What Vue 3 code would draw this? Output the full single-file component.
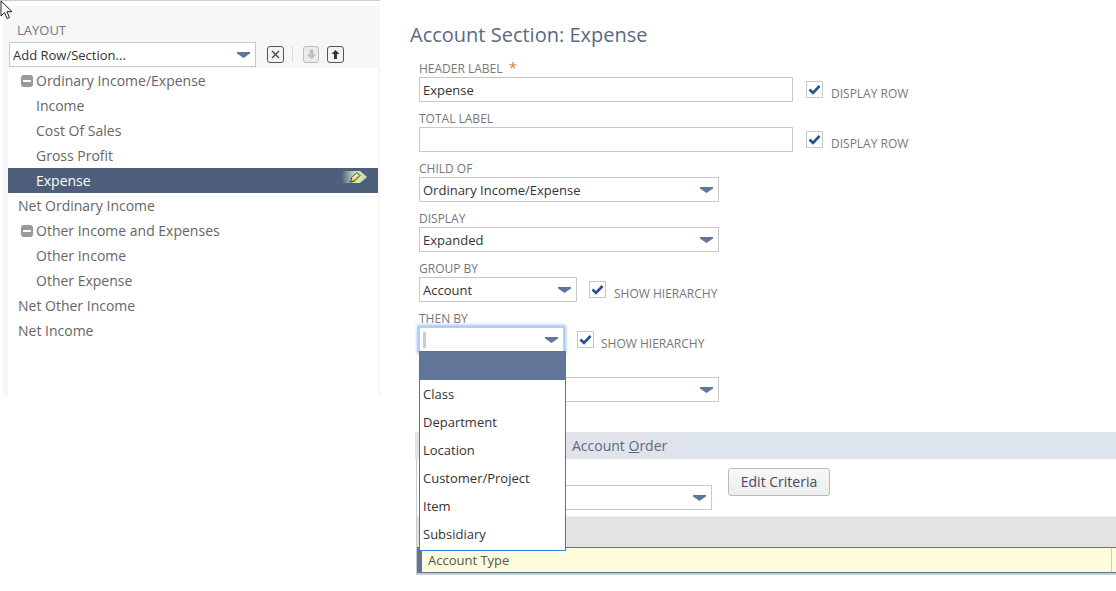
<script setup>
const rows = [
  { label: 'Ordinary Income/Expense', level: 1, toggle: true },
  { label: 'Income', level: 1 },
  { label: 'Cost Of Sales', level: 1 },
  { label: 'Gross Profit', level: 1 },
  { label: 'Expense', level: 1, selected: true },
  { label: 'Net Ordinary Income', level: 0 },
  { label: 'Other Income and Expenses', level: 1, toggle: true },
  { label: 'Other Income', level: 1 },
  { label: 'Other Expense', level: 1 },
  { label: 'Net Other Income', level: 0 },
  { label: 'Net Income', level: 0 }
]

const options = ['Class', 'Department', 'Location', 'Customer/Project', 'Item', 'Subsidiary']
</script>

<template>
  <div class="page">
    <svg class="cursor" width="13" height="20" viewBox="0 0 13 20">
      <path d="M1 1v15l3.5-3.4 2.6 6 2.4-1-2.6-5.9H12z" fill="#fff" stroke="#222" stroke-width="1" />
    </svg>

    <aside class="left">
      <div class="panel">
        <div class="layout-title">LAYOUT</div>
        <div class="toolbar">
          <div class="select add-select">
            <span>Add Row/Section...</span>
            <i class="arrow"></i>
          </div>
          <button class="tool first">
            <svg width="11" height="11" viewBox="0 0 11 11">
              <path d="M2 2l7 7M9 2l-7 7" stroke="#444" stroke-width="1.3" fill="none" />
            </svg>
          </button>
          <span class="sep"></span>
          <button class="tool disabled">
            <svg width="11" height="11" viewBox="0 0 11 11">
              <path d="M4 1h3v5h2.500L5.500 10 1.500 6H4z" fill="#c4c4c4" stroke="#aaa" stroke-width=".5" />
            </svg>
          </button>
          <button class="tool">
            <svg width="11" height="11" viewBox="0 0 11 11">
              <path d="M4 10h3V5h2.500L5.500 1 1.500 5H4z" fill="#333" />
            </svg>
          </button>
        </div>
        <ul class="tree">
          <li
            v-for="row in rows"
            :key="row.label"
            class="row"
            :class="{ selected: row.selected, indented: row.level === 1 }"
          >
            <span v-if="row.toggle" class="minus"></span>
            {{ row.label }}
            <svg v-if="row.selected" class="pencil" width="30" height="12" viewBox="0 0 30 12">
              <defs>
                <linearGradient id="tag" x1="0" x2="1" y1="0" y2="0">
                  <stop offset="0.15" stop-color="#dff2d0" stop-opacity="0" />
                  <stop offset="0.65" stop-color="#cfe9bc" />
                  <stop offset="1" stop-color="#c4e4ae" />
                </linearGradient>
              </defs>
              <path d="M0 0h23l7 6-7 6H0z" fill="url(#tag)" />
              <path d="M13.500 11l1-4 5.500-5.500 3 3-5.500 5.500z" fill="#f4c93f" stroke="#2c2c2c" stroke-width=".9" />
              <path d="M15.500 7.500l4.800-4.500" stroke="#fff" stroke-width="1.100" fill="none" />
            </svg>
          </li>
        </ul>
      </div>
    </aside>

    <main class="right">
      <h1>Account Section: Expense</h1>
      <div class="form">
        <div class="field">
          <label>HEADER LABEL <b class="req">*</b></label>
          <div class="line">
            <div class="input wide">Expense</div>
            <span class="check">
              <svg width="15" height="15" viewBox="0 0 15 15"><path d="M2.500 7.500L6 11l6.500-7" /></svg>
            </span>
            <span class="check-label">DISPLAY ROW</span>
          </div>
        </div>
        <div class="field">
          <label>TOTAL LABEL</label>
          <div class="line">
            <div class="input wide"></div>
            <span class="check">
              <svg width="15" height="15" viewBox="0 0 15 15"><path d="M2.500 7.500L6 11l6.500-7" /></svg>
            </span>
            <span class="check-label">DISPLAY ROW</span>
          </div>
        </div>
        <div class="field">
          <label>CHILD OF</label>
          <div class="select medium"><span>Ordinary Income/Expense</span><i class="arrow"></i></div>
        </div>
        <div class="field">
          <label>DISPLAY</label>
          <div class="select medium"><span>Expanded</span><i class="arrow"></i></div>
        </div>
        <div class="field">
          <label>GROUP BY</label>
          <div class="line">
            <div class="select group"><span>Account</span><i class="arrow"></i></div>
            <span class="check near">
              <svg width="15" height="15" viewBox="0 0 15 15"><path d="M2.500 7.500L6 11l6.500-7" /></svg>
            </span>
            <span class="check-label">SHOW HIERARCHY</span>
          </div>
        </div>
        <div class="field">
          <label>THEN BY</label>
          <div class="line">
            <div class="select then">
              <span class="caret"></span>
              <i class="arrow"></i>
              <ul class="menu">
                <li class="picked"></li>
                <li v-for="opt in options" :key="opt">{{ opt }}</li>
              </ul>
            </div>
            <span class="check nearer">
              <svg width="15" height="15" viewBox="0 0 15 15"><path d="M2.500 7.500L6 11l6.500-7" /></svg>
            </span>
            <span class="check-label">SHOW HIERARCHY</span>
          </div>
        </div>
        <div class="field">
          <label></label>
          <div class="select medium"><i class="arrow"></i></div>
        </div>
      </div>

      <div class="tabs">
        <div class="tab">Account <u>O</u>rder</div>
      </div>
      <div class="tab-body">
        <div class="criteria">
          <div class="select criteria-select"><i class="arrow"></i></div>
          <button class="edit">Edit Criteria</button>
        </div>
        <div class="grid-head"></div>
        <div class="grid-row">
          <span class="cell">Account Type</span>
          <span class="cell-end"></span>
        </div>
      </div>
    </main>
  </div>
</template>

<style>
html, body {
  margin: 0;
  background: #fff;
}
</style>

<style scoped>
.page {
  position: relative;
  display: flex;
  width: 1116px;
  height: 591px;
  overflow: hidden;
  font-family: "Open Sans", sans-serif;
  font-size: 13px;
  color: #666;
}

.cursor {
  position: absolute;
  left: 0;
  top: 0;
}

.left {
  width: 380px;
  height: 396px;
  flex: none;
  padding-top: 5px;
  box-sizing: border-box;
  border-top: 1px solid #ccc;
}

.panel {
  height: 390px;
  margin-left: 3px;
  background: #f6f6f6;
  padding: 0 2px 0 5px;
  display: flex;
  flex-direction: column;
}

.layout-title {
  height: 36px;
  padding: 15px 0 0 9px;
  box-sizing: border-box;
  line-height: 18px;
  color: #777;
}

.toolbar {
  display: flex;
  align-items: flex-start;
  height: 26px;
  margin-left: 1px;
}

.select {
  position: relative;
  display: flex;
  align-items: center;
  height: 25px;
  padding-left: 3px;
  box-sizing: border-box;
  border: 1px solid #c9c9c9;
  background: #fff;
  color: #333;
}

.arrow {
  position: absolute;
  right: 5px;
  top: 9px;
  width: 13px;
  height: 6px;
  background: #5f7599;
  clip-path: polygon(0 0, 100% 0, 100% 25%, 50% 100%, 0 25%);
}

.add-select {
  width: 247px;
}

.tool {
  display: flex;
  align-items: center;
  justify-content: center;
  width: 17px;
  height: 17px;
  padding: 0;
  margin: 4px 0 0 8px;
  border: 1px solid #555;
  border-radius: 3px;
  background: #f3f3f3;
}

.tool.first {
  margin-left: 11px;
}

.tool.disabled {
  width: 16px;
  margin-left: 1px;
  border-color: #bbb;
  background: #ececec;
}

.sep {
  width: 1px;
  height: 16px;
  margin: 4px 9px 0 8px;
  background: #ddd;
}

.tree {
  flex: 1;
  list-style: none;
  margin: 0;
  padding: 0;
  background: #fff;
}

.row {
  position: relative;
  display: flex;
  align-items: center;
  height: 25px;
  padding-left: 10px;
  font-size: 14px;
  color: #666;
}

.row.indented {
  padding-left: 28px;
}

.row.selected {
  background: #4d5f7a;
  color: #fff;
}

.minus {
  position: absolute;
  left: 13px;
  top: 7px;
  width: 12px;
  height: 12px;
  border-radius: 3px;
  background: #999;
}

.minus::after {
  content: "";
  position: absolute;
  left: 2px;
  right: 2px;
  top: 5px;
  height: 2px;
  background: #fff;
}

.pencil {
  position: absolute;
  right: 11px;
  top: 3px;
}

.right {
  flex: 1;
  min-width: 0;
  padding-left: 35px;
}

h1 {
  margin: 0 0 0 -5px;
  padding-top: 21px;
  height: 59px;
  box-sizing: border-box;
  font-size: 20px;
  font-weight: 400;
  line-height: 27px;
  color: #5a6a80;
}

.form {
  margin-left: 4px;
}

.field {
  height: 50px;
}

.field label {
  display: block;
  height: 18px;
  line-height: 19px;
  font-size: 12px;
  color: #777;
}

.req {
  margin-left: 3px;
  font-weight: 400;
  font-size: 15px;
  line-height: 12px;
  color: #d18a26;
}

.line {
  display: flex;
}

.input {
  height: 25px;
  line-height: 25px;
  padding-left: 3px;
  box-sizing: border-box;
  border: 1px solid #c9c9c9;
  color: #333;
}

.wide {
  width: 374px;
}

.medium {
  width: 300px;
}

.group {
  width: 158px;
}

.then {
  width: 145px;
  border-color: #b9cfe6;
  box-shadow: 0 0 3px 2px #9cc3ee;
}

.caret {
  width: 3px;
  height: 16px;
  background: #ccc;
}

.check {
  width: 17px;
  height: 17px;
  margin: 4px 8px 0 13px;
  box-sizing: border-box;
  border: 1px solid #c9c9c9;
  background: #fff;
}

.check svg {
  display: block;
}

.check path {
  fill: none;
  stroke: #24508f;
  stroke-width: 2.6;
}

.check.near {
  margin-left: 12px;
}

.check.nearer {
  margin-right: 7px;
}

.check-label {
  padding-top: 9px;
  line-height: 16px;
  font-size: 12px;
  color: #777;
}

.menu {
  position: absolute;
  z-index: 2;
  left: -1px;
  top: 23px;
  width: 147px;
  margin: 0;
  padding: 0 0 2px;
  list-style: none;
  box-sizing: border-box;
  border: 1px solid #2b7de0;
  background: #fff;
}

.menu li {
  height: 28px;
  line-height: 28px;
  padding-left: 3px;
  color: #333;
}

.menu .picked {
  background: #62769a;
}

.tabs {
  margin-top: 23px;
  height: 27px;
  background: #dfe5ee;
}

.tab {
  width: 263px;
  height: 27px;
  box-sizing: border-box;
  padding-left: 157px;
  line-height: 27px;
  font-size: 14px;
  background: #e1e3ea;
  color: #5a6a80;
}

.tab-body {
  margin-left: 1px;
  height: 116px;
  border-left: 1px solid #ccc;
  border-bottom: 2px solid #ccc;
  box-sizing: border-box;
}

.criteria {
  display: flex;
  height: 57px;
}

.criteria-select {
  width: 293px;
  margin: 26px 0 0 2px;
}

.edit {
  width: 102px;
  height: 28px;
  margin: 9px 0 0 16px;
  padding: 0 0 2px;
  border: 1px solid #b8b8b8;
  border-radius: 3px;
  background: linear-gradient(#f8f8f8, #ececec);
  font-family: inherit;
  font-size: 14px;
  color: #444a60;
}

.grid-head {
  height: 31px;
  background: #e3e3e3;
  border-top: 1px solid #ededed;
  box-sizing: border-box;
}

.grid-row {
  display: flex;
  height: 26px;
  box-sizing: border-box;
  border-top: 1px solid #5f7599;
  border-bottom: 1px solid #5f7599;
  border-left: 5px solid #5f7599;
  background: #fefcdc;
  color: #555;
  line-height: 25px;
}

.cell {
  width: 689px;
  padding-left: 6px;
  box-sizing: border-box;
}

.cell-end {
  border-left: 1px solid #ccc;
}
</style>
